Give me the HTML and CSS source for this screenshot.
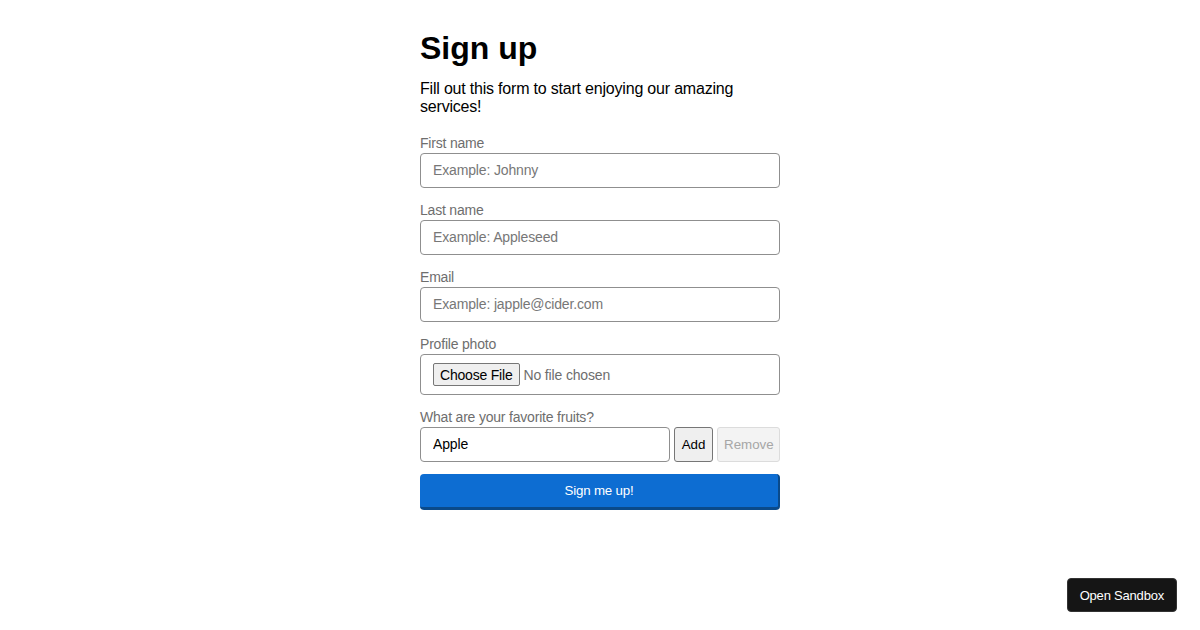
FILE: index.html
```html
<!DOCTYPE html>
<html lang="en">
<head>
<meta charset="utf-8">
<title>Sign up</title>
<link rel="stylesheet" href="styles.css">
</head>
<body>
<main class="page">
  <form class="signup">
    <h1 class="title">Sign up</h1>
    <p class="intro">Fill out this form to start enjoying our amazing services!</p>
    <div class="field">
      <label class="label" for="first">First name</label>
      <input class="input" id="first" type="text" placeholder="Example: Johnny">
    </div>
    <div class="field">
      <label class="label" for="last">Last name</label>
      <input class="input" id="last" type="text" placeholder="Example: Appleseed">
    </div>
    <div class="field">
      <label class="label" for="email">Email</label>
      <input class="input" id="email" type="email" placeholder="Example: japple@cider.com">
    </div>
    <div class="field">
      <label class="label" for="photo">Profile photo</label>
      <input class="input file" id="photo" type="file">
    </div>
    <div class="field field-last">
      <label class="label" for="fruit">What are your favorite fruits?</label>
      <div class="fruit-row">
        <input class="input fruit" id="fruit" type="text" value="Apple">
        <button class="btn btn-add" type="button">Add</button>
        <button class="btn btn-remove" type="button" disabled>Remove</button>
      </div>
    </div>
    <button class="submit" type="submit">Sign me up!</button>
  </form>
</main>
<button class="sandbox" type="button">Open Sandbox</button>
</body>
</html>
```

FILE: styles.css
```css
html, body {
  margin: 0;
  padding: 0;
  background: #ffffff;
}
body {
  font-family: "Liberation Sans", Arial, sans-serif;
  color: #000;
  letter-spacing: -0.2px;
}
.page {
  display: flex;
  justify-content: center;
  padding-top: 30px;
}
.signup {
  width: 360px;
  display: flex;
  flex-direction: column;
}
.title {
  margin: 0;
  font-size: 32px;
  font-weight: bold;
  line-height: normal;
  letter-spacing: 0;
}
.intro {
  margin: 13px 0 19px;
  font-size: 16px;
  line-height: 18px;
}
.field {
  display: flex;
  flex-direction: column;
  gap: 2px;
  margin-bottom: 14px;
}
.field-last {
  margin-bottom: 12px;
}
.label {
  font-size: 14px;
  line-height: 16px;
  color: #6e6e6e;
}
.input {
  box-sizing: border-box;
  height: 35px;
  width: 100%;
  margin: 0;
  padding: 0 12px 1px;
  border: 1px solid #8f8f8f;
  border-radius: 4px;
  font-family: "Liberation Sans", Arial, sans-serif;
  font-size: 14px;
  letter-spacing: -0.15px;
  color: #000;
  background: #fff;
}
.input::placeholder {
  color: #777;
}
.file {
  height: 41px;
  padding: 8px 12px;
  color: #6e6e6e;
}
.file::file-selector-button {
  font-family: "Liberation Sans", Arial, sans-serif;
  font-size: 14px;
  letter-spacing: -0.2px;
  height: 23px;
  padding: 0 6px;
  margin-right: 4px;
  color: #000;
  background: #efefef;
  border: 1px solid #767676;
  border-radius: 2px;
}
.fruit-row {
  display: flex;
  gap: 4px;
}
.fruit {
  width: 250px;
  flex: none;
}
.btn {
  box-sizing: border-box;
  height: 35px;
  margin: 0;
  padding: 0 6px;
  font-family: "Liberation Sans", Arial, sans-serif;
  font-size: 13.333px;
  color: #000;
  background: #efefef;
  border: 1px solid #767676;
  border-radius: 3px;
}
.btn-add {
  width: 39px;
  flex: none;
}
.btn-remove {
  flex: 1;
  min-width: 0;
  color: #a6a6a6;
  background: #f3f3f3;
  border-color: #dcdcdc;
}
.submit {
  box-sizing: border-box;
  height: 36px;
  width: 100%;
  margin: 0;
  padding: 0;
  font-family: "Liberation Sans", Arial, sans-serif;
  font-size: 13.333px;
  letter-spacing: -0.2px;
  color: #fff;
  background: #0d6dd2;
  border: none;
  border-right: 2px solid #0a4a8a;
  border-bottom: 3px solid #0a4a8a;
  border-radius: 4px;
}
.sandbox {
  position: fixed;
  right: 23px;
  bottom: 18px;
  height: 34px;
  padding: 0 12px;
  font-family: "Liberation Sans", Arial, sans-serif;
  font-size: 13px;
  letter-spacing: -0.2px;
  color: #fff;
  background: #151515;
  border: 1px solid #333;
  border-radius: 4px;
}
```
